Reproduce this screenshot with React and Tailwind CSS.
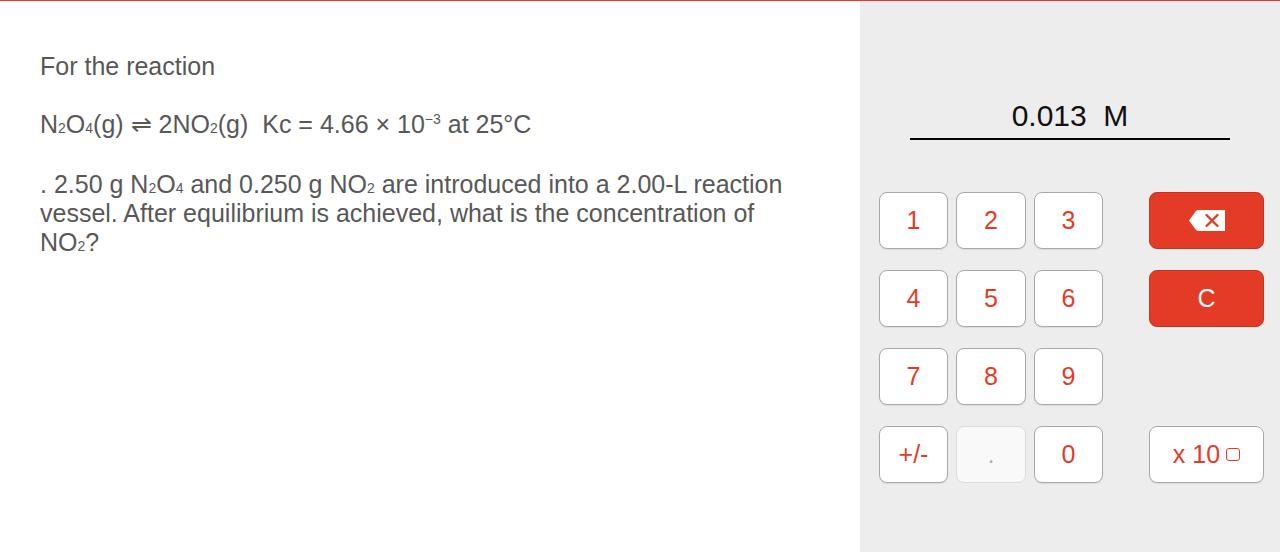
const KEY_ROWS = [
  ["1", "2", "3"],
  ["4", "5", "6"],
  ["7", "8", "9"],
  ["+/-", ".", "0"],
];

function BackspaceIcon() {
  return (
    <svg width="36" height="21" viewBox="0 0 36 21">
      <path d="M0 10.5 L7 1 Q8 0 9.5 0 H36 V21 H9.5 Q8 21 7 20 Z" fill="#fff" />
      <path d="M17.5 5 L28.5 16 M28.5 5 L17.5 16" stroke="#e33b26" strokeWidth="2.4" strokeLinecap="round" />
    </svg>
  );
}

function Key({ label }) {
  if (label === ".") {
    return (
      <div className="h-[57px] rounded-[8px] border border-[#dcdcdc] bg-[#f9f9f9] flex items-center justify-center text-[24px] text-[#aaa]">
        .
      </div>
    );
  }
  return (
    <button className="h-[57px] rounded-[8px] border border-[#a9a9a9] bg-white shadow-[0_1px_1px_rgba(0,0,0,0.08)] flex items-center justify-center text-[25px] text-[#e33b26]">
      {label}
    </button>
  );
}

function Sub({ children }) {
  return <span className="text-[14px] leading-[0]">{children}</span>;
}

export default function App() {
  return (
    <div className="w-[1280px] h-[552px] bg-white flex flex-col overflow-hidden font-['Liberation_Sans',Arial,sans-serif]">
      <div className="h-px bg-[#e33b26]" />
      <div className="flex flex-1">
        {/* Question */}
        <div className="w-[860px] pl-[40px] pr-[60px] pt-[51px] text-[25px] leading-[29px] text-[#585858]">
          <p>For the reaction</p>
          <p className="mt-[29px]">
            N<Sub>2</Sub>O<Sub>4</Sub>(g) ⇌ 2NO<Sub>2</Sub>(g)&nbsp;&nbsp;Kc = 4.66 × 10
            <span className="text-[14px] leading-[0] align-[9px]">−3</span> at 25°C
          </p>
          <p className="mt-[31px]">
            . 2.50 g N<Sub>2</Sub>O<Sub>4</Sub> and 0.250 g NO<Sub>2</Sub> are introduced into a 2.00-L reaction vessel. After
            equilibrium is achieved, what is the concentration of NO<Sub>2</Sub>?
          </p>
        </div>

        {/* Calculator */}
        <div className="flex-1 bg-[#ededed] pt-[97px] pl-[19px] pr-[16px]">
          <div className="ml-[31px] mr-[34px] border-b-2 border-black pb-[4px] text-center text-[30px] leading-[36px] text-[#111]">
            0.013&nbsp;&nbsp;M
          </div>
          <div className="mt-[52px] flex justify-between">
            <div className="grid grid-cols-[69px_70px_69px] gap-x-[8px] gap-y-[21px]">
              {KEY_ROWS.flat().map((k) => (
                <Key key={k} label={k} />
              ))}
            </div>
            <div className="w-[115px] flex flex-col gap-[21px]">
              <button className="h-[57px] rounded-[8px] bg-[#e33b26] border border-[#c9321f] flex items-center justify-center">
                <BackspaceIcon />
              </button>
              <button className="h-[57px] rounded-[8px] bg-[#e33b26] border border-[#c9321f] text-white text-[25px] flex items-center justify-center">
                C
              </button>
              <div className="h-[57px]" />
              <button className="h-[57px] rounded-[8px] border border-[#a9a9a9] bg-white shadow-[0_1px_1px_rgba(0,0,0,0.08)] text-[25px] text-[#e33b26] flex items-center justify-center">
                x 10
                <span className="inline-block w-[14px] h-[13px] ml-[6px] border border-[#e33b26] rounded-[3px] align-[6px]" />
              </button>
            </div>
          </div>
        </div>
      </div>
    </div>
  );
}
